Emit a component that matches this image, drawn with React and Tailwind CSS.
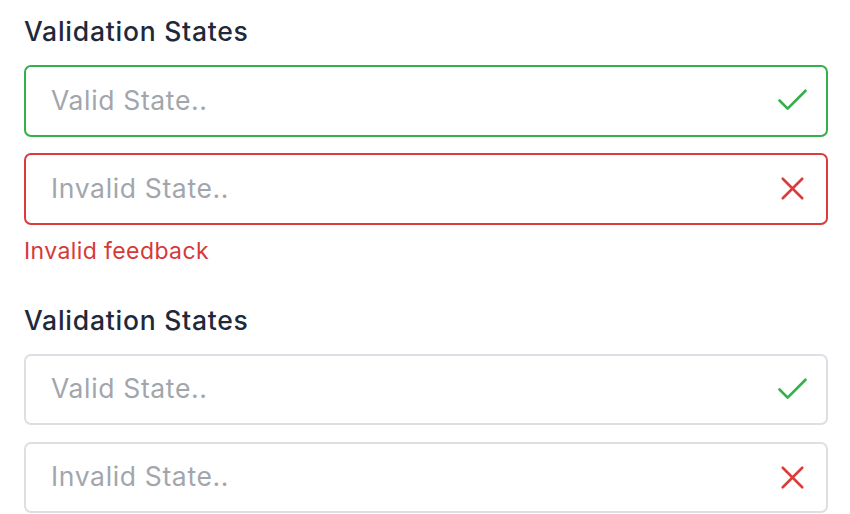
import { Check, X } from 'lucide-react'

const fontCls = "font-['Inter','Noto_Sans',sans-serif]"

function Field({ placeholder, state, tone }) {
  const border =
    tone === 'valid' ? 'border-[#32b04a]' : tone === 'invalid' ? 'border-[#dc3b3b]' : 'border-[#dcdfe3]'
  return (
    <div className={`box-border flex h-[71.5px] w-full items-center rounded-[7px] border-2 bg-white pl-[25px] pr-[14px] ${border}`}>
      <input
        className={`min-w-0 flex-1 bg-transparent text-[26.5px] tracking-[0.65px] text-[#1f2937] outline-none placeholder:text-[#a2a6ac] ${fontCls}`}
        placeholder={placeholder}
        readOnly
      />
      {state === 'valid' ? (
        <Check size={39} strokeWidth={1.6} className="shrink-0 text-[#32b04a]" />
      ) : (
        <X size={39} strokeWidth={1.6} className="shrink-0 text-[#dc3b3b]" />
      )}
    </div>
  )
}

function Heading({ children }) {
  return (
    <h2 className={`mb-[15px] text-[26.5px] font-medium leading-[38px] tracking-[0.75px] text-[#1e293b] ${fontCls}`}>
      {children}
    </h2>
  )
}

export default function App() {
  return (
    <div className={`min-h-screen bg-white ${fontCls}`}>
      <div className="ml-[24px] w-[804px] pt-[12px]">
        <Heading>Validation States</Heading>
        <div className="flex flex-col gap-[16.5px]">
          <Field placeholder="Valid State.." state="valid" tone="valid" />
          <Field placeholder="Invalid State.." state="invalid" tone="invalid" />
        </div>
        <p className="mt-[9px] text-[23px] leading-[34px] tracking-[0.4px] text-[#d63939]">Invalid feedback</p>

        <div className="mt-[33px]">
          <Heading>Validation States</Heading>
          <div className="flex flex-col gap-[16.5px]">
            <Field placeholder="Valid State.." state="valid" />
            <Field placeholder="Invalid State.." state="invalid" />
          </div>
        </div>
      </div>
    </div>
  )
}
